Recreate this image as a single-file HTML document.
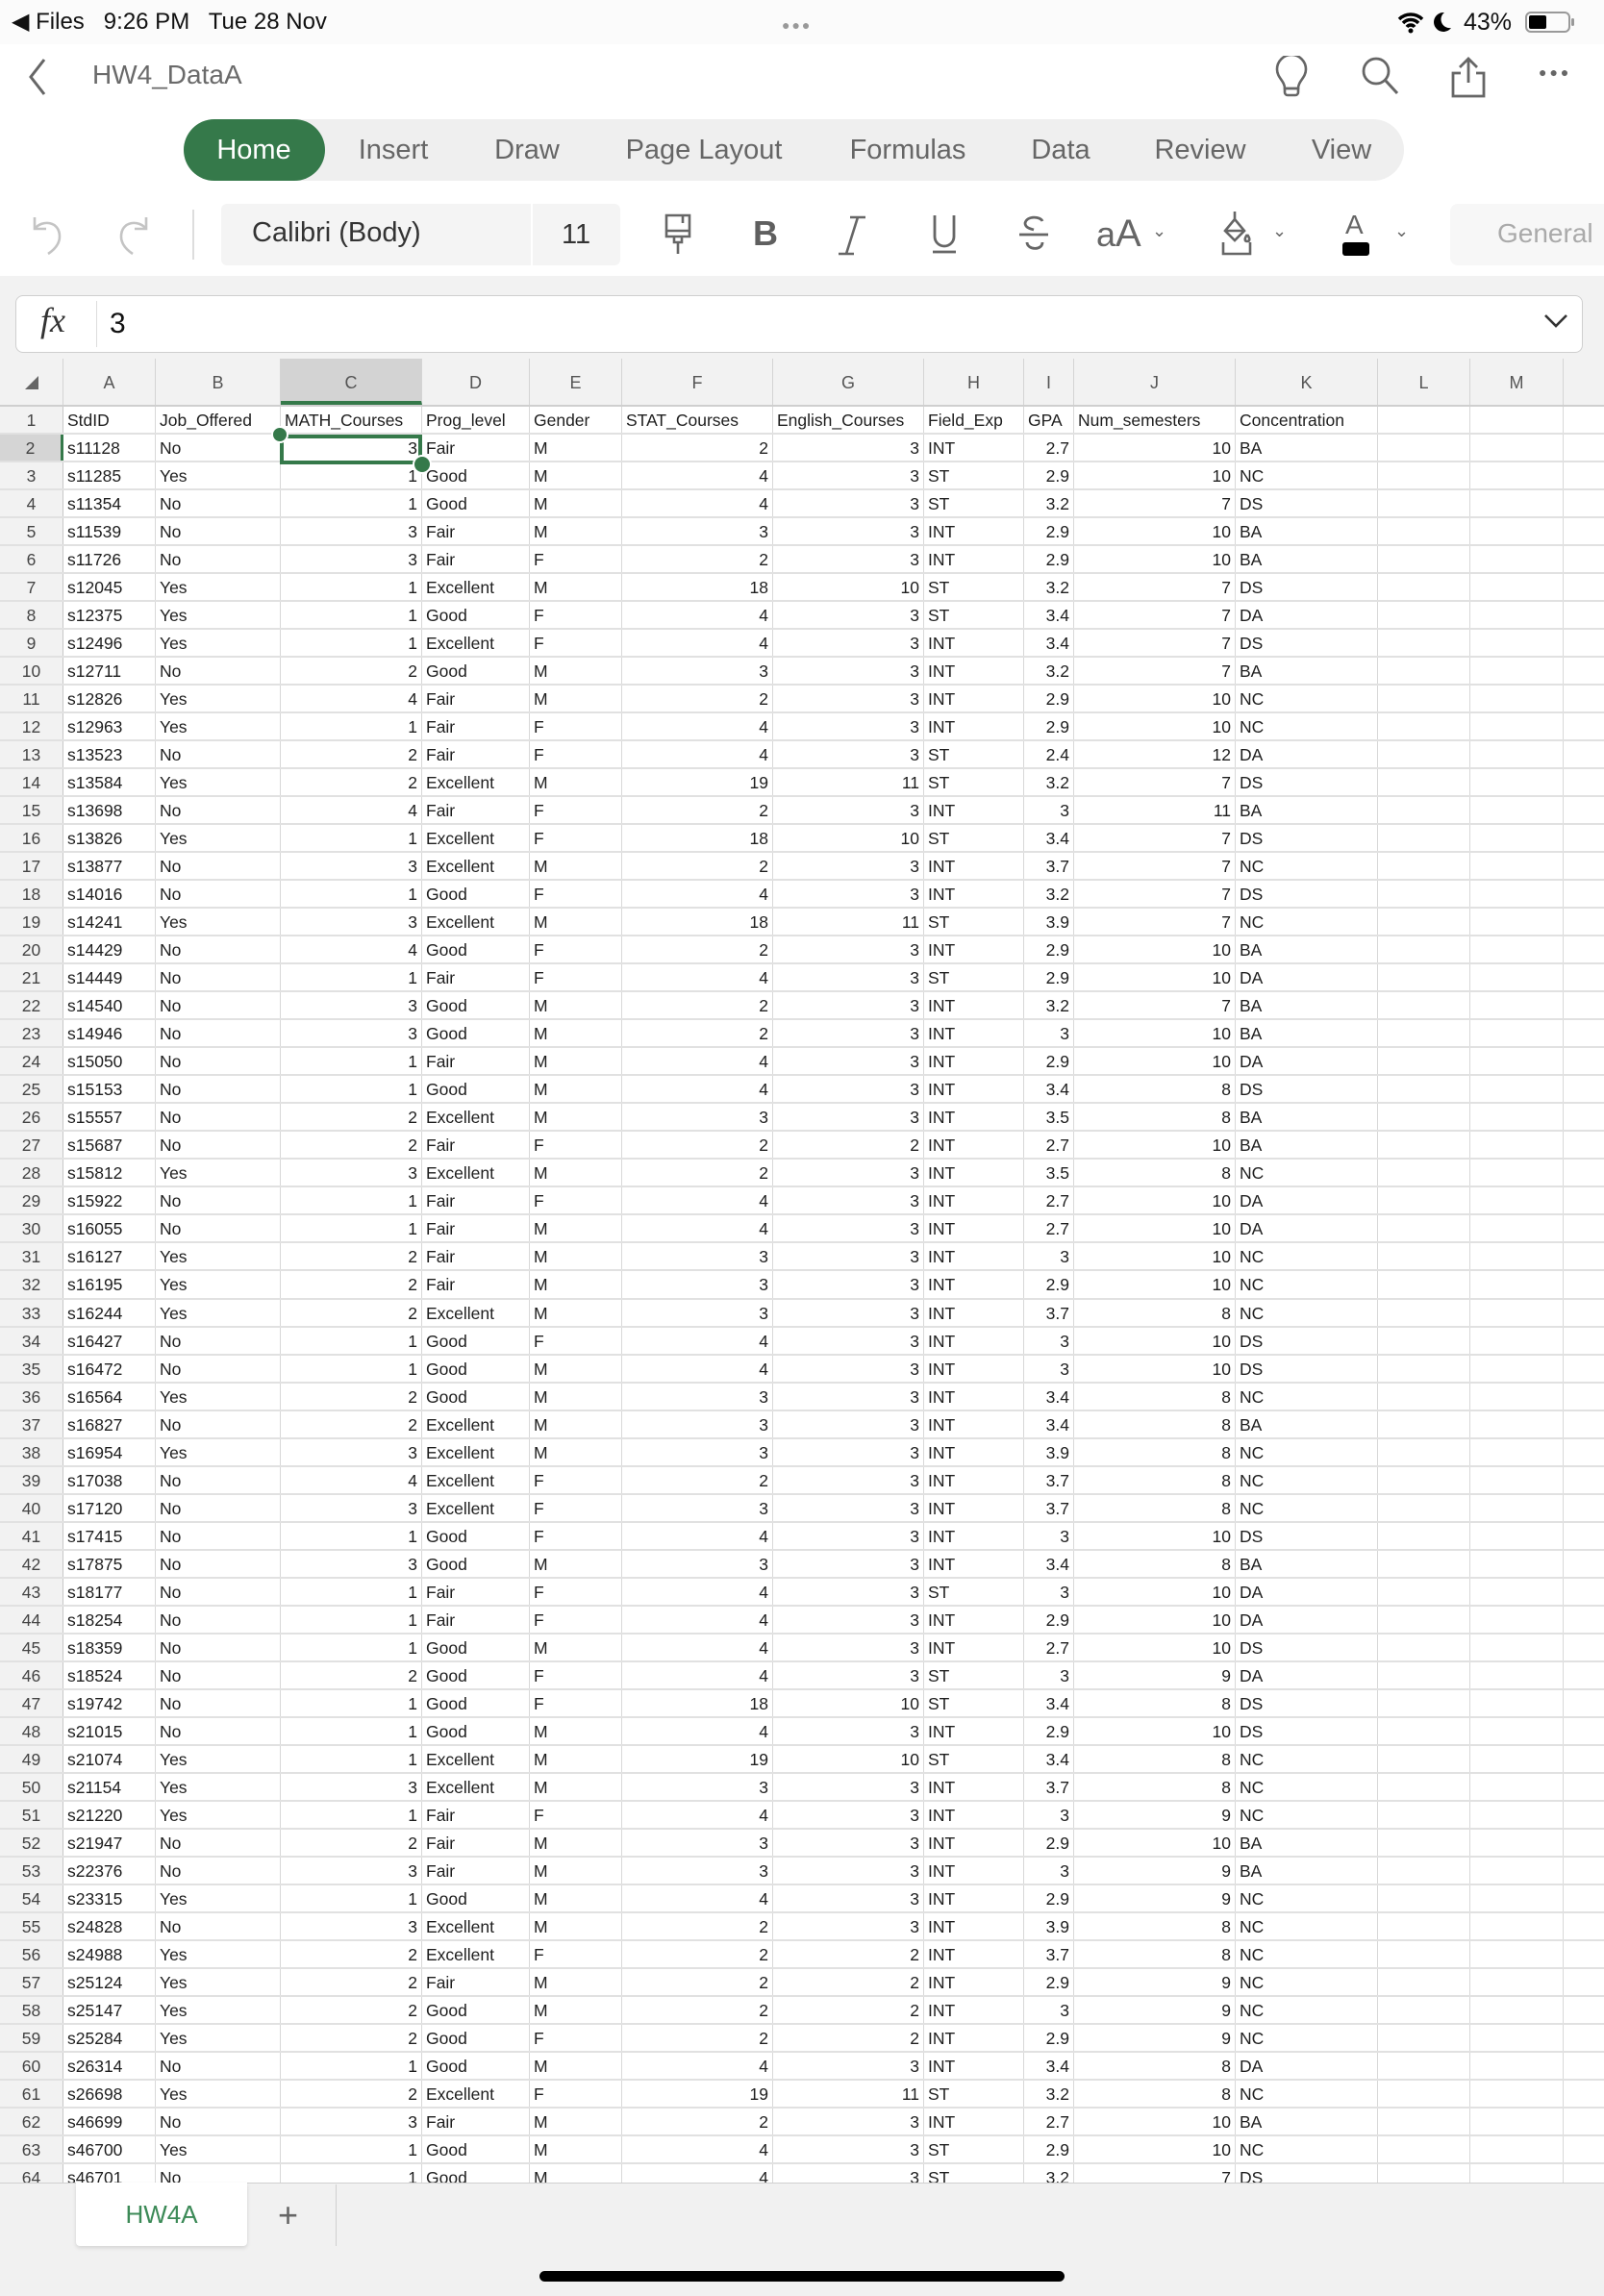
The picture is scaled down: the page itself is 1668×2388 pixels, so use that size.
<!DOCTYPE html>
<html><head><meta charset="utf-8"><style>
*{box-sizing:border-box;margin:0;padding:0}
body{width:1668px;height:2388px;overflow:hidden;background:#fff;font-family:"Liberation Sans",sans-serif;position:relative}
.a{position:absolute}
.tab{position:absolute;top:124px;height:64px;line-height:64px;font-size:29px;color:#666;transform:translateX(-50%);white-space:nowrap}
#grid{position:absolute;top:373px;left:0;width:1668px;height:1897px;overflow:hidden}
.r{display:flex;height:29.02px;line-height:28px;font-size:17.5px;color:#1e1e1e;border-bottom:2px solid #e1e1e1;white-space:nowrap}
.r span{overflow:visible;border-right:1px solid #d8d8d8;padding:0 4px;flex:none;position:relative}
.r span:nth-child(1){width:66px;text-align:center;background:#f2f2f2;color:#444;border-right:1px solid #c8c8c8}
.r span:nth-child(2){width:96px}
.r span:nth-child(3){width:130px}
.r span:nth-child(4){width:147px;text-align:right}
.r span:nth-child(5){width:112px}
.r span:nth-child(6){width:96px}
.r span:nth-child(7){width:157px;text-align:right}
.r span:nth-child(8){width:157px;text-align:right}
.r span:nth-child(9){width:104px}
.r span:nth-child(10){width:52px;text-align:right}
.r span:nth-child(11){width:168px;text-align:right}
.r span:nth-child(12){width:148px}
.r span:nth-child(13){width:96px}
.r span:nth-child(14){width:97px}
.r span:nth-child(15){width:60px}
.r.h span{text-align:left!important}
.r.h span:nth-child(1){text-align:center!important}
.ch{display:flex;height:50px;line-height:50px;background:#f2f2f2;font-size:18px;color:#555;border-bottom:2px solid #cfcfcf}
.ch span{flex:none;text-align:center;border-right:1px solid #d4d4d4}
</style></head><body>
<div class="a" style="left:0;top:0;width:1668px;height:46px;background:#fbfbfb"></div>
<div class="a" style="left:12px;top:8px;font-size:24px;color:#111;white-space:pre">◀ Files   9:26 PM   Tue 28 Nov</div>
<div class="a" style="left:813px;top:18px;width:40px;font-size:14px;color:#999;letter-spacing:2px">●●●</div>
<svg class="a" style="left:1453px;top:11px" width="28" height="24" viewBox="0 0 28 24"><path d="M2 9a17 17 0 0 1 24 0M6 13a11 11 0 0 1 16 0M10 17a5 5 0 0 1 8 0" stroke="#000" stroke-width="3.5" fill="none"/><circle cx="14" cy="21" r="2.5"/></svg>
<svg class="a" style="left:1490px;top:12px" width="20" height="22" viewBox="0 0 20 22"><path d="M12 1a10 10 0 1 0 7 16A9 9 0 0 1 12 1z" fill="#000"/></svg>
<div class="a" style="left:1522px;top:9px;font-size:25px;color:#111">43%</div>
<div class="a" style="left:1586px;top:12px;width:47px;height:22px;border:2px solid #999;border-radius:6px"><div style="margin:2px;width:18px;height:14px;background:#000;border-radius:2px"></div></div>
<div class="a" style="left:1634px;top:19px;width:3px;height:8px;background:#999;border-radius:2px"></div>
<svg class="a" style="left:26px;top:60px" width="26" height="40" viewBox="0 0 26 40"><path d="M20 2L6 20l14 18" stroke="#666" stroke-width="3" fill="none"/></svg>
<div class="a" style="left:96px;top:62px;font-size:28px;color:#6a6a6a">HW4_DataA</div>
<svg class="a" style="left:1326px;top:58px" width="34" height="44" viewBox="0 0 34 44"><path d="M10 34c0-8-8-11-8-20a15 15 0 0 1 30 0c0 9-8 12-8 20z" stroke="#666" stroke-width="2.6" fill="none"/><path d="M10 34h14v4a3 3 0 0 1-3 3h-8a3 3 0 0 1-3-3z" stroke="#666" stroke-width="2.6" fill="none"/></svg>
<svg class="a" style="left:1415px;top:58px" width="40" height="42" viewBox="0 0 40 42"><circle cx="16" cy="16" r="13" stroke="#666" stroke-width="2.8" fill="none"/><path d="M26 26l12 13" stroke="#666" stroke-width="3"/></svg>
<svg class="a" style="left:1508px;top:58px" width="38" height="44" viewBox="0 0 38 44"><path d="M19 28V3M10 12l9-9 9 9M11 18H3v24h32V18h-8" stroke="#666" stroke-width="2.8" fill="none"/></svg>
<div class="a" style="left:1600px;top:67px;font-size:14px;color:#666;letter-spacing:3px">●●●</div>
<div class="a" style="left:191px;top:124px;width:1269px;height:64px;background:#efefef;border-radius:32px"></div>
<div class="a" style="left:191px;top:124px;width:147px;height:64px;background:#35794a;border-radius:32px"></div>
<div class="tab" style="left:264px;color:#fff">Home</div>
<div class="tab" style="left:409px">Insert</div>
<div class="tab" style="left:548px">Draw</div>
<div class="tab" style="left:732px">Page Layout</div>
<div class="tab" style="left:944px">Formulas</div>
<div class="tab" style="left:1103px">Data</div>
<div class="tab" style="left:1248px">Review</div>
<div class="tab" style="left:1395px">View</div>
<svg class="a" style="left:30px;top:222px" width="40" height="44" viewBox="0 0 40 44"><path d="M6 4v12h12M6 16C14 6 32 8 32 24c0 8-6 14-12 18" stroke="#c4c4c4" stroke-width="2.6" fill="none"/></svg>
<svg class="a" style="left:118px;top:222px" width="40" height="44" viewBox="0 0 40 44"><path d="M34 4v12H22M34 16C26 6 8 8 8 24c0 8 6 14 12 18" stroke="#c4c4c4" stroke-width="2.6" fill="none"/></svg>
<div class="a" style="left:200px;top:218px;width:2px;height:52px;background:#ddd"></div>
<div class="a" style="left:230px;top:212px;width:415px;height:64px;background:#f4f4f4;border-radius:6px"></div>
<div class="a" style="left:552px;top:212px;width:2px;height:64px;background:#fff"></div>
<div class="a" style="left:262px;top:226px;font-size:29px;color:#333">Calibri (Body)</div>
<div class="a" style="left:584px;top:228px;font-size:29px;color:#333">11</div>
<svg class="a" style="left:690px;top:222px" width="30" height="44" viewBox="0 0 30 44"><path d="M3 2h24v22H3zM3 18h24M20 2v8M11 24v6h8v-6M15 30v12" stroke="#666" stroke-width="2.6" fill="none"/></svg>
<div class="a" style="left:783px;top:222px;font-size:36px;font-weight:bold;color:#5f5f5f">B</div>
<svg class="a" style="left:870px;top:224px" width="32" height="42" viewBox="0 0 32 42"><path d="M14 2h16M2 40h16M22 2L10 40" stroke="#666" stroke-width="2.6" fill="none"/></svg>
<svg class="a" style="left:966px;top:222px" width="32" height="44" viewBox="0 0 32 44"><path d="M6 2v22a10 10 0 0 0 20 0V2M4 40h24" stroke="#666" stroke-width="2.8" fill="none"/></svg>
<svg class="a" style="left:1058px;top:222px" width="34" height="44" viewBox="0 0 34 44"><path d="M26 8c-2-5-16-6-18 2 0 5 6 6 9 7M2 22h30M10 30c0 8 16 9 16 0" stroke="#666" stroke-width="2.8" fill="none"/></svg>
<div class="a" style="left:1140px;top:221px;font-size:36px;color:#666">a<span style="font-size:40px">A</span></div>
<div class="a" style="left:1198px;top:230px;font-size:18px;color:#666">⌄</div>
<svg class="a" style="left:1266px;top:218px" width="40" height="50" viewBox="0 0 40 50"><path d="M18 2v10M18 10l-10 12 10 10 10-10zM8 22h20M31 26c-3 4-3 7 0 7s3-3 0-7M6 34v12h28V34" stroke="#666" stroke-width="2.6" fill="none"/></svg>
<div class="a" style="left:1323px;top:230px;font-size:18px;color:#666">⌄</div>
<div class="a" style="left:1399px;top:218px;font-size:28px;color:#666">A</div>
<div class="a" style="left:1396px;top:252px;width:28px;height:14px;background:#000;border-radius:3px"></div>
<div class="a" style="left:1450px;top:230px;font-size:18px;color:#666">⌄</div>
<div class="a" style="left:1508px;top:212px;width:160px;height:64px;background:#f7f7f7;border-radius:8px 0 0 8px"></div>
<div class="a" style="left:1557px;top:227px;font-size:28px;color:#aaa;white-space:nowrap;width:100px;overflow:hidden">General</div>
<div class="a" style="left:0;top:287px;width:1668px;height:86px;background:#f2f2f2"></div>
<div class="a" style="left:16px;top:307px;width:1630px;height:60px;background:#fff;border:1px solid #cfcfcf;border-radius:8px"></div>
<div class="a" style="left:42px;top:312px;font-size:36px;font-style:italic;color:#333;font-family:'Liberation Serif',serif">fx</div>
<div class="a" style="left:100px;top:313px;width:1px;height:48px;background:#ddd"></div>
<div class="a" style="left:114px;top:320px;font-size:30px;color:#111">3</div>
<svg class="a" style="left:1605px;top:325px" width="26" height="18" viewBox="0 0 26 18"><path d="M2 3l11 11L24 3" stroke="#333" stroke-width="2.6" fill="none"/></svg>
<div id="grid">
<div class="ch"><span style="width:66px;position:relative"><svg style="position:absolute;left:26px;top:18px" width="14" height="14"><path d="M14 0v14H0z" fill="#666"/></svg></span><span style="width:96px">A</span><span style="width:130px">B</span><span style="width:147px;background:#d3d3d3;border-bottom:4px solid #35794a">C</span><span style="width:112px">D</span><span style="width:96px">E</span><span style="width:157px">F</span><span style="width:157px">G</span><span style="width:104px">H</span><span style="width:52px">I</span><span style="width:168px">J</span><span style="width:148px">K</span><span style="width:96px">L</span><span style="width:97px">M</span><span style="width:60px"></span></div>
<div class="r h"><span>1</span><span>StdID</span><span>Job_Offered</span><span>MATH_Courses</span><span>Prog_level</span><span>Gender</span><span>STAT_Courses</span><span>English_Courses</span><span>Field_Exp</span><span>GPA</span><span>Num_semesters</span><span>Concentration</span><span></span><span></span><span></span></div>
<div class="r"><span style="background:#d5d5d5;border-right:3px solid #35794a">2</span><span>s11128</span><span>No</span><span>3</span><span>Fair</span><span>M</span><span>2</span><span>3</span><span>INT</span><span>2.7</span><span>10</span><span>BA</span><span></span><span></span><span></span></div>
<div class="r"><span>3</span><span>s11285</span><span>Yes</span><span>1</span><span>Good</span><span>M</span><span>4</span><span>3</span><span>ST</span><span>2.9</span><span>10</span><span>NC</span><span></span><span></span><span></span></div>
<div class="r"><span>4</span><span>s11354</span><span>No</span><span>1</span><span>Good</span><span>M</span><span>4</span><span>3</span><span>ST</span><span>3.2</span><span>7</span><span>DS</span><span></span><span></span><span></span></div>
<div class="r"><span>5</span><span>s11539</span><span>No</span><span>3</span><span>Fair</span><span>M</span><span>3</span><span>3</span><span>INT</span><span>2.9</span><span>10</span><span>BA</span><span></span><span></span><span></span></div>
<div class="r"><span>6</span><span>s11726</span><span>No</span><span>3</span><span>Fair</span><span>F</span><span>2</span><span>3</span><span>INT</span><span>2.9</span><span>10</span><span>BA</span><span></span><span></span><span></span></div>
<div class="r"><span>7</span><span>s12045</span><span>Yes</span><span>1</span><span>Excellent</span><span>M</span><span>18</span><span>10</span><span>ST</span><span>3.2</span><span>7</span><span>DS</span><span></span><span></span><span></span></div>
<div class="r"><span>8</span><span>s12375</span><span>Yes</span><span>1</span><span>Good</span><span>F</span><span>4</span><span>3</span><span>ST</span><span>3.4</span><span>7</span><span>DA</span><span></span><span></span><span></span></div>
<div class="r"><span>9</span><span>s12496</span><span>Yes</span><span>1</span><span>Excellent</span><span>F</span><span>4</span><span>3</span><span>INT</span><span>3.4</span><span>7</span><span>DS</span><span></span><span></span><span></span></div>
<div class="r"><span>10</span><span>s12711</span><span>No</span><span>2</span><span>Good</span><span>M</span><span>3</span><span>3</span><span>INT</span><span>3.2</span><span>7</span><span>BA</span><span></span><span></span><span></span></div>
<div class="r"><span>11</span><span>s12826</span><span>Yes</span><span>4</span><span>Fair</span><span>M</span><span>2</span><span>3</span><span>INT</span><span>2.9</span><span>10</span><span>NC</span><span></span><span></span><span></span></div>
<div class="r"><span>12</span><span>s12963</span><span>Yes</span><span>1</span><span>Fair</span><span>F</span><span>4</span><span>3</span><span>INT</span><span>2.9</span><span>10</span><span>NC</span><span></span><span></span><span></span></div>
<div class="r"><span>13</span><span>s13523</span><span>No</span><span>2</span><span>Fair</span><span>F</span><span>4</span><span>3</span><span>ST</span><span>2.4</span><span>12</span><span>DA</span><span></span><span></span><span></span></div>
<div class="r"><span>14</span><span>s13584</span><span>Yes</span><span>2</span><span>Excellent</span><span>M</span><span>19</span><span>11</span><span>ST</span><span>3.2</span><span>7</span><span>DS</span><span></span><span></span><span></span></div>
<div class="r"><span>15</span><span>s13698</span><span>No</span><span>4</span><span>Fair</span><span>F</span><span>2</span><span>3</span><span>INT</span><span>3</span><span>11</span><span>BA</span><span></span><span></span><span></span></div>
<div class="r"><span>16</span><span>s13826</span><span>Yes</span><span>1</span><span>Excellent</span><span>F</span><span>18</span><span>10</span><span>ST</span><span>3.4</span><span>7</span><span>DS</span><span></span><span></span><span></span></div>
<div class="r"><span>17</span><span>s13877</span><span>No</span><span>3</span><span>Excellent</span><span>M</span><span>2</span><span>3</span><span>INT</span><span>3.7</span><span>7</span><span>NC</span><span></span><span></span><span></span></div>
<div class="r"><span>18</span><span>s14016</span><span>No</span><span>1</span><span>Good</span><span>F</span><span>4</span><span>3</span><span>INT</span><span>3.2</span><span>7</span><span>DS</span><span></span><span></span><span></span></div>
<div class="r"><span>19</span><span>s14241</span><span>Yes</span><span>3</span><span>Excellent</span><span>M</span><span>18</span><span>11</span><span>ST</span><span>3.9</span><span>7</span><span>NC</span><span></span><span></span><span></span></div>
<div class="r"><span>20</span><span>s14429</span><span>No</span><span>4</span><span>Good</span><span>F</span><span>2</span><span>3</span><span>INT</span><span>2.9</span><span>10</span><span>BA</span><span></span><span></span><span></span></div>
<div class="r"><span>21</span><span>s14449</span><span>No</span><span>1</span><span>Fair</span><span>F</span><span>4</span><span>3</span><span>ST</span><span>2.9</span><span>10</span><span>DA</span><span></span><span></span><span></span></div>
<div class="r"><span>22</span><span>s14540</span><span>No</span><span>3</span><span>Good</span><span>M</span><span>2</span><span>3</span><span>INT</span><span>3.2</span><span>7</span><span>BA</span><span></span><span></span><span></span></div>
<div class="r"><span>23</span><span>s14946</span><span>No</span><span>3</span><span>Good</span><span>M</span><span>2</span><span>3</span><span>INT</span><span>3</span><span>10</span><span>BA</span><span></span><span></span><span></span></div>
<div class="r"><span>24</span><span>s15050</span><span>No</span><span>1</span><span>Fair</span><span>M</span><span>4</span><span>3</span><span>INT</span><span>2.9</span><span>10</span><span>DA</span><span></span><span></span><span></span></div>
<div class="r"><span>25</span><span>s15153</span><span>No</span><span>1</span><span>Good</span><span>M</span><span>4</span><span>3</span><span>INT</span><span>3.4</span><span>8</span><span>DS</span><span></span><span></span><span></span></div>
<div class="r"><span>26</span><span>s15557</span><span>No</span><span>2</span><span>Excellent</span><span>M</span><span>3</span><span>3</span><span>INT</span><span>3.5</span><span>8</span><span>BA</span><span></span><span></span><span></span></div>
<div class="r"><span>27</span><span>s15687</span><span>No</span><span>2</span><span>Fair</span><span>F</span><span>2</span><span>2</span><span>INT</span><span>2.7</span><span>10</span><span>BA</span><span></span><span></span><span></span></div>
<div class="r"><span>28</span><span>s15812</span><span>Yes</span><span>3</span><span>Excellent</span><span>M</span><span>2</span><span>3</span><span>INT</span><span>3.5</span><span>8</span><span>NC</span><span></span><span></span><span></span></div>
<div class="r"><span>29</span><span>s15922</span><span>No</span><span>1</span><span>Fair</span><span>F</span><span>4</span><span>3</span><span>INT</span><span>2.7</span><span>10</span><span>DA</span><span></span><span></span><span></span></div>
<div class="r"><span>30</span><span>s16055</span><span>No</span><span>1</span><span>Fair</span><span>M</span><span>4</span><span>3</span><span>INT</span><span>2.7</span><span>10</span><span>DA</span><span></span><span></span><span></span></div>
<div class="r"><span>31</span><span>s16127</span><span>Yes</span><span>2</span><span>Fair</span><span>M</span><span>3</span><span>3</span><span>INT</span><span>3</span><span>10</span><span>NC</span><span></span><span></span><span></span></div>
<div class="r"><span>32</span><span>s16195</span><span>Yes</span><span>2</span><span>Fair</span><span>M</span><span>3</span><span>3</span><span>INT</span><span>2.9</span><span>10</span><span>NC</span><span></span><span></span><span></span></div>
<div class="r"><span>33</span><span>s16244</span><span>Yes</span><span>2</span><span>Excellent</span><span>M</span><span>3</span><span>3</span><span>INT</span><span>3.7</span><span>8</span><span>NC</span><span></span><span></span><span></span></div>
<div class="r"><span>34</span><span>s16427</span><span>No</span><span>1</span><span>Good</span><span>F</span><span>4</span><span>3</span><span>INT</span><span>3</span><span>10</span><span>DS</span><span></span><span></span><span></span></div>
<div class="r"><span>35</span><span>s16472</span><span>No</span><span>1</span><span>Good</span><span>M</span><span>4</span><span>3</span><span>INT</span><span>3</span><span>10</span><span>DS</span><span></span><span></span><span></span></div>
<div class="r"><span>36</span><span>s16564</span><span>Yes</span><span>2</span><span>Good</span><span>M</span><span>3</span><span>3</span><span>INT</span><span>3.4</span><span>8</span><span>NC</span><span></span><span></span><span></span></div>
<div class="r"><span>37</span><span>s16827</span><span>No</span><span>2</span><span>Excellent</span><span>M</span><span>3</span><span>3</span><span>INT</span><span>3.4</span><span>8</span><span>BA</span><span></span><span></span><span></span></div>
<div class="r"><span>38</span><span>s16954</span><span>Yes</span><span>3</span><span>Excellent</span><span>M</span><span>3</span><span>3</span><span>INT</span><span>3.9</span><span>8</span><span>NC</span><span></span><span></span><span></span></div>
<div class="r"><span>39</span><span>s17038</span><span>No</span><span>4</span><span>Excellent</span><span>F</span><span>2</span><span>3</span><span>INT</span><span>3.7</span><span>8</span><span>NC</span><span></span><span></span><span></span></div>
<div class="r"><span>40</span><span>s17120</span><span>No</span><span>3</span><span>Excellent</span><span>F</span><span>3</span><span>3</span><span>INT</span><span>3.7</span><span>8</span><span>NC</span><span></span><span></span><span></span></div>
<div class="r"><span>41</span><span>s17415</span><span>No</span><span>1</span><span>Good</span><span>F</span><span>4</span><span>3</span><span>INT</span><span>3</span><span>10</span><span>DS</span><span></span><span></span><span></span></div>
<div class="r"><span>42</span><span>s17875</span><span>No</span><span>3</span><span>Good</span><span>M</span><span>3</span><span>3</span><span>INT</span><span>3.4</span><span>8</span><span>BA</span><span></span><span></span><span></span></div>
<div class="r"><span>43</span><span>s18177</span><span>No</span><span>1</span><span>Fair</span><span>F</span><span>4</span><span>3</span><span>ST</span><span>3</span><span>10</span><span>DA</span><span></span><span></span><span></span></div>
<div class="r"><span>44</span><span>s18254</span><span>No</span><span>1</span><span>Fair</span><span>F</span><span>4</span><span>3</span><span>INT</span><span>2.9</span><span>10</span><span>DA</span><span></span><span></span><span></span></div>
<div class="r"><span>45</span><span>s18359</span><span>No</span><span>1</span><span>Good</span><span>M</span><span>4</span><span>3</span><span>INT</span><span>2.7</span><span>10</span><span>DS</span><span></span><span></span><span></span></div>
<div class="r"><span>46</span><span>s18524</span><span>No</span><span>2</span><span>Good</span><span>F</span><span>4</span><span>3</span><span>ST</span><span>3</span><span>9</span><span>DA</span><span></span><span></span><span></span></div>
<div class="r"><span>47</span><span>s19742</span><span>No</span><span>1</span><span>Good</span><span>F</span><span>18</span><span>10</span><span>ST</span><span>3.4</span><span>8</span><span>DS</span><span></span><span></span><span></span></div>
<div class="r"><span>48</span><span>s21015</span><span>No</span><span>1</span><span>Good</span><span>M</span><span>4</span><span>3</span><span>INT</span><span>2.9</span><span>10</span><span>DS</span><span></span><span></span><span></span></div>
<div class="r"><span>49</span><span>s21074</span><span>Yes</span><span>1</span><span>Excellent</span><span>M</span><span>19</span><span>10</span><span>ST</span><span>3.4</span><span>8</span><span>NC</span><span></span><span></span><span></span></div>
<div class="r"><span>50</span><span>s21154</span><span>Yes</span><span>3</span><span>Excellent</span><span>M</span><span>3</span><span>3</span><span>INT</span><span>3.7</span><span>8</span><span>NC</span><span></span><span></span><span></span></div>
<div class="r"><span>51</span><span>s21220</span><span>Yes</span><span>1</span><span>Fair</span><span>F</span><span>4</span><span>3</span><span>INT</span><span>3</span><span>9</span><span>NC</span><span></span><span></span><span></span></div>
<div class="r"><span>52</span><span>s21947</span><span>No</span><span>2</span><span>Fair</span><span>M</span><span>3</span><span>3</span><span>INT</span><span>2.9</span><span>10</span><span>BA</span><span></span><span></span><span></span></div>
<div class="r"><span>53</span><span>s22376</span><span>No</span><span>3</span><span>Fair</span><span>M</span><span>3</span><span>3</span><span>INT</span><span>3</span><span>9</span><span>BA</span><span></span><span></span><span></span></div>
<div class="r"><span>54</span><span>s23315</span><span>Yes</span><span>1</span><span>Good</span><span>M</span><span>4</span><span>3</span><span>INT</span><span>2.9</span><span>9</span><span>NC</span><span></span><span></span><span></span></div>
<div class="r"><span>55</span><span>s24828</span><span>No</span><span>3</span><span>Excellent</span><span>M</span><span>2</span><span>3</span><span>INT</span><span>3.9</span><span>8</span><span>NC</span><span></span><span></span><span></span></div>
<div class="r"><span>56</span><span>s24988</span><span>Yes</span><span>2</span><span>Excellent</span><span>F</span><span>2</span><span>2</span><span>INT</span><span>3.7</span><span>8</span><span>NC</span><span></span><span></span><span></span></div>
<div class="r"><span>57</span><span>s25124</span><span>Yes</span><span>2</span><span>Fair</span><span>M</span><span>2</span><span>2</span><span>INT</span><span>2.9</span><span>9</span><span>NC</span><span></span><span></span><span></span></div>
<div class="r"><span>58</span><span>s25147</span><span>Yes</span><span>2</span><span>Good</span><span>M</span><span>2</span><span>2</span><span>INT</span><span>3</span><span>9</span><span>NC</span><span></span><span></span><span></span></div>
<div class="r"><span>59</span><span>s25284</span><span>Yes</span><span>2</span><span>Good</span><span>F</span><span>2</span><span>2</span><span>INT</span><span>2.9</span><span>9</span><span>NC</span><span></span><span></span><span></span></div>
<div class="r"><span>60</span><span>s26314</span><span>No</span><span>1</span><span>Good</span><span>M</span><span>4</span><span>3</span><span>INT</span><span>3.4</span><span>8</span><span>DA</span><span></span><span></span><span></span></div>
<div class="r"><span>61</span><span>s26698</span><span>Yes</span><span>2</span><span>Excellent</span><span>F</span><span>19</span><span>11</span><span>ST</span><span>3.2</span><span>8</span><span>NC</span><span></span><span></span><span></span></div>
<div class="r"><span>62</span><span>s46699</span><span>No</span><span>3</span><span>Fair</span><span>M</span><span>2</span><span>3</span><span>INT</span><span>2.7</span><span>10</span><span>BA</span><span></span><span></span><span></span></div>
<div class="r"><span>63</span><span>s46700</span><span>Yes</span><span>1</span><span>Good</span><span>M</span><span>4</span><span>3</span><span>ST</span><span>2.9</span><span>10</span><span>NC</span><span></span><span></span><span></span></div>
<div class="r"><span>64</span><span>s46701</span><span>No</span><span>1</span><span>Good</span><span>M</span><span>4</span><span>3</span><span>ST</span><span>3.2</span><span>7</span><span>DS</span><span></span><span></span><span></span></div>
<div style="position:absolute;left:291px;top:79px;width:148px;height:31px;border:4px solid #35794a"></div>
<div style="position:absolute;left:282px;top:70px;width:18px;height:18px;border-radius:50%;background:#35794a;border:2px solid #fff"></div>
<div style="position:absolute;left:429px;top:100px;width:20px;height:20px;border-radius:50%;background:#35794a;border:2px solid #fff"></div>
</div>
<div class="a" style="left:0;top:2270px;width:1668px;height:118px;background:#f1f1f1;border-top:1px solid #d0d0d0"></div>
<div class="a" style="left:79px;top:2270px;width:178px;height:66px;background:#fff;border-radius:0 0 4px 4px;box-shadow:0 2px 4px rgba(0,0,0,.12);text-align:center;line-height:66px;font-size:26px;color:#3c8a57">HW4A</div>
<div class="a" style="left:289px;top:2283px;font-size:36px;color:#666;font-weight:300">+</div>
<div class="a" style="left:349px;top:2272px;width:1px;height:64px;background:#d0d0d0"></div>
<div class="a" style="left:561px;top:2362px;width:546px;height:11px;background:#000;border-radius:6px"></div>
</body></html>
